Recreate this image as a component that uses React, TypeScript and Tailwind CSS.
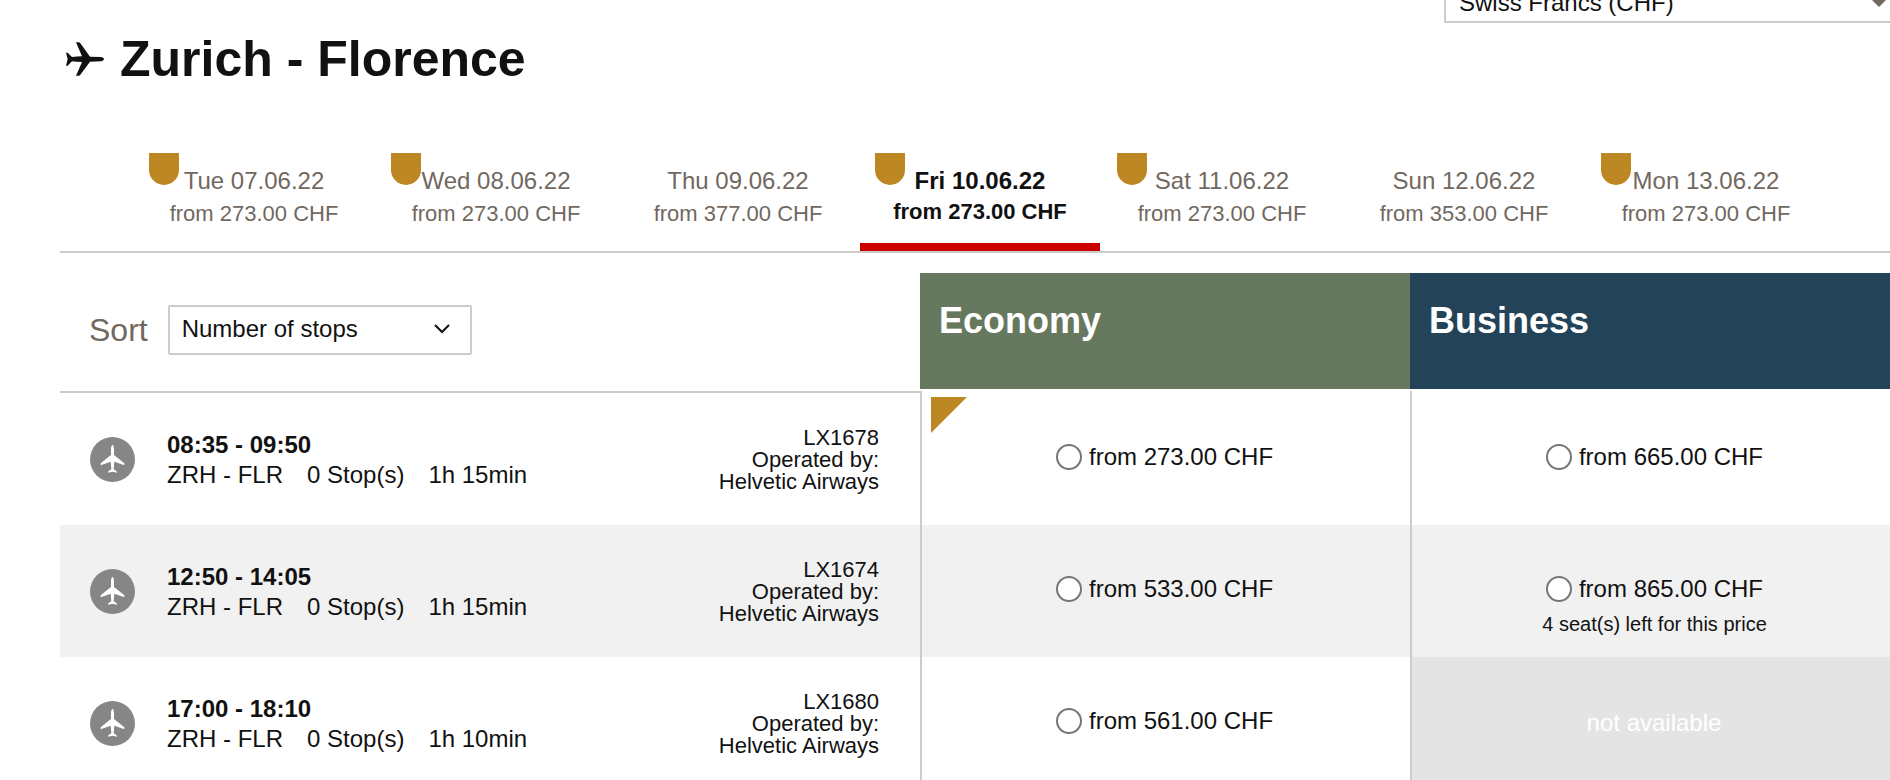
import { useState } from "react";
import clsx from "clsx";

type Fare = {
  price: string;
  lowest?: boolean;
  note?: string;
};

type Flight = {
  number: string;
  times: string;
  duration: string;
  economy: Fare | null;
  business: Fare | null;
};

const days = [
  { date: "Tue 07.06.22", price: "273.00", lowest: true },
  { date: "Wed 08.06.22", price: "273.00", lowest: true },
  { date: "Thu 09.06.22", price: "377.00", lowest: false },
  { date: "Fri 10.06.22", price: "273.00", lowest: true },
  { date: "Sat 11.06.22", price: "273.00", lowest: true },
  { date: "Sun 12.06.22", price: "353.00", lowest: false },
  { date: "Mon 13.06.22", price: "273.00", lowest: true },
];

const flights: Flight[] = [
  {
    number: "LX1678",
    times: "08:35 - 09:50",
    duration: "1h 15min",
    economy: { price: "273.00", lowest: true },
    business: { price: "665.00" },
  },
  {
    number: "LX1674",
    times: "12:50 - 14:05",
    duration: "1h 15min",
    economy: { price: "533.00" },
    business: { price: "865.00", note: "4 seat(s) left for this price" },
  },
  {
    number: "LX1680",
    times: "17:00 - 18:10",
    duration: "1h 10min",
    economy: { price: "561.00" },
    business: null,
  },
];

function TitlePlane() {
  return (
    <svg viewBox="18 36 114 102" className="h-[34px] w-[38px]" aria-hidden="true">
      <path
        fill="currentColor"
        d="M18 68 L23 68 L36 81 Q50 79 66 79 L48 37 L56 37 Q59 37 61 40 L90 80 L123 81 Q132 82 132 87 Q132 92 123 94 L90 95 L61 134 Q59 137 56 137 L48 137 L66 96 Q50 96 36 94 L23 107 L18 107 L23 87 Z"
      />
    </svg>
  );
}

function FlightIcon() {
  return (
    <svg viewBox="0 0 135 135" className="size-[45px] shrink-0" aria-hidden="true">
      <circle cx="67.5" cy="67.5" r="67.5" fill="#868686" />
      <path
        fill="#fff"
        d="M67.5 23 Q71 25 72 33 L72 54 L103 79 L103 85 L73 74 L71 97 L80 103 L81 107 L67.5 104 L54 107 L55 103 L64 97 L62 74 L32 85 L32 79 L63 54 L63 33 Q64 25 67.5 23 Z"
      />
    </svg>
  );
}

function FareCell({ fare, group }: { fare: Fare | null; group: string }) {
  if (!fare) {
    return (
      <td className="border-l-2 border-[#cccccc] bg-[#e4e4e4] pt-[46px] pr-1 text-center align-top text-2xl leading-10 text-white">
        not available
      </td>
    );
  }

  return (
    <td className="relative border-l-2 border-[#cccccc] pt-[45px] text-center align-top">
      {fare.lowest && (
        <svg viewBox="0 0 36 36" className="absolute top-1 left-[9px] size-9" aria-hidden="true">
          <path d="M0 0 H36 L0 36 Z" fill="#bd8824" />
        </svg>
      )}
      <label className="flex items-center justify-center gap-[7px] pr-[3px] text-2xl leading-[38px]">
        <input
          type="radio"
          name={group}
          className="size-[26px] appearance-none rounded-full border-2 border-[#767676] bg-white checked:border-8 checked:border-[#cc0000]"
        />
        from {fare.price} CHF
      </label>
      {fare.note && <p className="pr-[3px] text-xl leading-8">{fare.note}</p>}
    </td>
  );
}

export default function App() {
  const [activeDay, setActiveDay] = useState(3);

  return (
    <main className="overflow-x-hidden bg-white pl-[60px] font-['Liberation_Sans',Arial,sans-serif] text-[#111111]">
      <div className="-mt-[17px] flex justify-end">
        <div className="relative w-[446px]">
          <select
            aria-label="Currency"
            className="h-10 w-full appearance-none rounded-bl-xs border-2 border-r-0 border-[#cccccc] bg-white pl-[13px] text-2xl"
          >
            <option>Swiss Francs (CHF)</option>
          </select>
          <svg
            viewBox="0 0 16 8"
            className="pointer-events-none absolute top-4 right-[3px] h-2 w-4"
            aria-hidden="true"
          >
            <path d="M0 0 H16 L8 8 Z" fill="#716860" />
          </svg>
        </div>
      </div>

      <h1 className="mt-1.5 flex items-center gap-4 pl-1.5 text-[50px] leading-[60px] font-bold">
        <TitlePlane />
        Zurich - Florence
      </h1>

      <nav className="mt-[63px] grid grid-cols-7 gap-0.5 border-b-2 border-[#cccccc] pr-16 pl-[74px]">
        {days.map((day, i) => (
          <button
            key={day.date}
            onClick={() => setActiveDay(i)}
            className={clsx(
              "relative flex h-[99px] flex-col items-center border-b-8 pt-[13px]",
              i === activeDay
                ? "border-[#cc0000] font-bold"
                : "border-transparent text-[#716860]"
            )}
          >
            {day.lowest && (
              <span className="absolute top-px left-[15px] h-8 w-[30px] rounded-b-full bg-[#bd8824]" />
            )}
            <span className="text-2xl leading-8">{day.date}</span>
            <span
              className={clsx(
                "text-[22px]",
                i === activeDay ? "leading-[30px]" : "leading-[34px]"
              )}
            >
              from {day.price} CHF
            </span>
          </button>
        ))}
      </nav>

      <div className="mt-5 -mr-2.5">
        <table className="w-full table-fixed border-separate border-spacing-0">
          <colgroup>
            <col className="w-[46.74%]" />
            <col />
            <col />
          </colgroup>
          <thead>
            <tr className="h-[120px]">
              <td className="border-b-2 border-[#cccccc] pt-8 pl-[29px] align-top">
                <div className="flex items-center gap-5">
                  <label
                    htmlFor="sort"
                    className="text-[32px] leading-[50px] text-[#716860]"
                  >
                    Sort
                  </label>
                  <div className="relative w-[304px]">
                    <select
                      id="sort"
                      className="h-[50px] w-full appearance-none rounded-xs border-2 border-[#cccccc] bg-white pb-0.5 pl-3 text-2xl"
                    >
                      <option>Number of stops</option>
                      <option>Departure time</option>
                      <option>Duration</option>
                    </select>
                    <svg
                      viewBox="0 0 16 10"
                      className="pointer-events-none absolute top-[19px] right-[22px] h-2.5 w-4"
                      aria-hidden="true"
                    >
                      <path
                        d="M1 1 L8 8 L15 1"
                        fill="none"
                        stroke="#111111"
                        strokeWidth="2"
                      />
                    </svg>
                  </div>
                </div>
              </td>
              <th className="p-0 text-left align-top">
                <div className="mb-0.5 h-[116px] bg-[#66795f] pt-6 pl-[19px] text-4xl leading-[48px] font-bold text-white">
                  Economy
                </div>
                <div className="h-0.5 border-l-2 border-[#cccccc]" />
              </th>
              <th className="p-0 text-left align-top">
                <div className="mb-0.5 h-[116px] bg-[#234358] pt-6 pl-[19px] text-4xl leading-[48px] font-bold text-white">
                  Business
                </div>
                <div className="h-0.5 border-l-2 border-[#cccccc]" />
              </th>
            </tr>
          </thead>
          <tbody>
            {flights.map((flight) => (
              <tr key={flight.number} className="h-[132px] even:bg-[#f1f1f1]">
                <td className="pr-[41px] pl-[30px]">
                  <div className="flex items-center">
                    <FlightIcon />
                    <div className="ml-8 pt-0.5 text-2xl leading-[30px]">
                      <p className="font-bold">{flight.times}</p>
                      <p className="flex gap-6">
                        <span>ZRH - FLR</span>
                        <span>0 Stop(s)</span>
                        <span>{flight.duration}</span>
                      </p>
                    </div>
                    <p className="ml-auto pt-0.5 text-right text-[22px] leading-[22px]">
                      {flight.number}
                      <br />
                      Operated by:
                      <br />
                      Helvetic Airways
                    </p>
                  </div>
                </td>
                <FareCell fare={flight.economy} group="fare" />
                <FareCell fare={flight.business} group="fare" />
              </tr>
            ))}
          </tbody>
        </table>
      </div>
    </main>
  );
}
